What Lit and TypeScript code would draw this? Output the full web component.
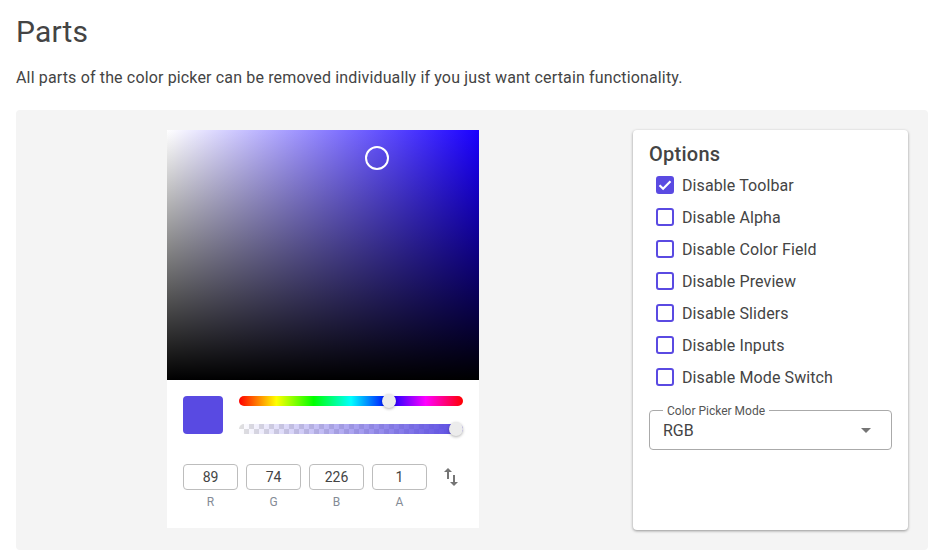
import { LitElement, html, css, svg } from "lit";
import { customElement } from "lit/decorators.js";

const OPTIONS: [string, boolean][] = [
  ["Disable Toolbar", true],
  ["Disable Alpha", false],
  ["Disable Color Field", false],
  ["Disable Preview", false],
  ["Disable Sliders", false],
  ["Disable Inputs", false],
  ["Disable Mode Switch", false],
];
const CHANNELS: [string, string][] = [["89", "R"], ["74", "G"], ["226", "B"], ["1", "A"]];

@customElement("app-root")
export class AppRoot extends LitElement {
  static styles = css`
    :host { display: block; font-family: Roboto, "Liberation Sans", sans-serif; color: #444; background: #fff; height: 558px; box-sizing: border-box; padding: 0 15px 0 16px; overflow: hidden; }
    h1 { margin: 0; padding-top: 12px; height: 45px; font-size: 30px; line-height: 40px; font-weight: 400; letter-spacing: 0.2px; }
    p { margin: 9px 0 0; height: 44px; font-size: 16px; line-height: 24px; letter-spacing: 0.15px; }
    .panel { display: flex; gap: 23px; height: 400px; padding: 20px; background: #f4f4f4; border-radius: 4px; }
    .left { flex: 1; display: flex; justify-content: center; align-items: flex-start; }
    .picker { width: 312px; height: 398px; background: #fff; }
    .field { position: relative; height: 250px; background: linear-gradient(to top, #000, transparent), linear-gradient(to right, #fff, rgb(26, 0, 255)); }
    .cursor { position: absolute; left: 198px; top: 16px; width: 24px; height: 24px; box-sizing: border-box; border: 2px solid #fff; border-radius: 50%; }
    .controls { padding: 16px; }
    .top { display: flex; gap: 16px; height: 38px; }
    .swatch { width: 40px; height: 38px; border-radius: 4px; background: rgb(89, 74, 226); }
    .sliders { flex: 1; display: flex; flex-direction: column; justify-content: space-between; }
    .track { position: relative; height: 10px; border-radius: 5px; }
    .hue { background: linear-gradient(to right, #f00, #ff0, #0f0, #0ff, #00f, #f0f, #f00); }
    .alpha { background: linear-gradient(to right, rgba(89, 74, 226, 0), rgb(89, 74, 226)), repeating-conic-gradient(#fff 0 25%, #e0e0e0 0 50%) 0 0 / 10px 10px; }
    .thumb { position: absolute; top: -2px; width: 14px; height: 14px; border-radius: 50%; background: #ececec; box-shadow: 0 1px 3px rgba(0, 0, 0, 0.3); }
    .inputs { display: flex; gap: 8px; margin-top: 30px; }
    .channel { flex: none; width: 55px; display: flex; flex-direction: column; align-items: center; }
    .box { width: 100%; height: 26px; box-sizing: border-box; border: 1px solid #bdbdbd; border-radius: 4px; display: flex; align-items: center; justify-content: center; font-size: 14px; }
    .name { margin-top: 4px; font-size: 12px; line-height: 16px; color: #858b96; }
    .swap { flex: none; display: block; margin: 1px 0 0 4px; width: 24px; height: 24px; fill: #757575; }
    .card { flex: none; width: 243px; padding: 12px 16px 0; background: #fff; border-radius: 4px; box-shadow: 0 1px 3px rgba(0, 0, 0, 0.4); }
    h2 { margin: 0 0 3px; font-size: 20px; line-height: 24px; font-weight: 500; letter-spacing: 0.25px; }
    .row { display: flex; align-items: center; height: 32px; padding-left: 7px; font-size: 16px; letter-spacing: 0.1px; }
    .check { width: 18px; height: 18px; box-sizing: border-box; margin-right: 8px; border: 2px solid #5a4ae2; border-radius: 3px; }
    .check.on { background: #5a4ae2; }
    .check svg { display: block; width: 14px; height: 14px; fill: none; stroke: #fff; stroke-width: 2.2; }
    .select { position: relative; margin-top: 17px; height: 40px; box-sizing: border-box; border: 1px solid #aaa; border-radius: 4px; padding: 0 20px 0 13px; display: flex; align-items: center; justify-content: space-between; font-size: 16px; }
    .legend { position: absolute; left: 13px; top: -7px; padding: 0 4px; background: #fff; font-size: 12px; line-height: 14px; color: #555; }
    .caret { width: 0; height: 0; border: 5px solid transparent; border-top-color: #757575; border-bottom: 0; }
  `;

  render() {
    return html`
      <h1>Parts</h1>
      <p>All parts of the color picker can be removed individually if you just want certain functionality.</p>
      <div class="panel">
        <div class="left">
          <div class="picker">
            <div class="field"><div class="cursor"></div></div>
            <div class="controls">
              <div class="top">
                <div class="swatch"></div>
                <div class="sliders">
                  <div class="track hue"><div class="thumb" style="left: 143px"></div></div>
                  <div class="track alpha"><div class="thumb" style="left: 210px"></div></div>
                </div>
              </div>
              <div class="inputs">
                ${CHANNELS.map(([value, name]) => html`
                  <div class="channel"><div class="box">${value}</div><div class="name">${name}</div></div>
                `)}
                <svg class="swap" viewBox="0 0 24 24">${svg`<path d="M16 17.01V10h-2v7.01h-3L15 21l4-3.99h-3zM9 3L5 6.99h3V14h2V6.99h3L9 3z"/>`}</svg>
              </div>
            </div>
          </div>
        </div>
        <div class="card">
          <h2>Options</h2>
          ${OPTIONS.map(([label, on]) => html`
            <div class="row">
              <span class="check ${on ? "on" : ""}">
                ${on ? html`<svg viewBox="0 0 14 14">${svg`<path d="M1.5 7.2l3.6 3.6 7.4-7.6"/>`}</svg>` : ""}
              </span>${label}
            </div>
          `)}
          <div class="select">
            <span class="legend">Color Picker Mode</span>
            <span>RGB</span><span class="caret"></span>
          </div>
        </div>
      </div>
    `;
  }
}
